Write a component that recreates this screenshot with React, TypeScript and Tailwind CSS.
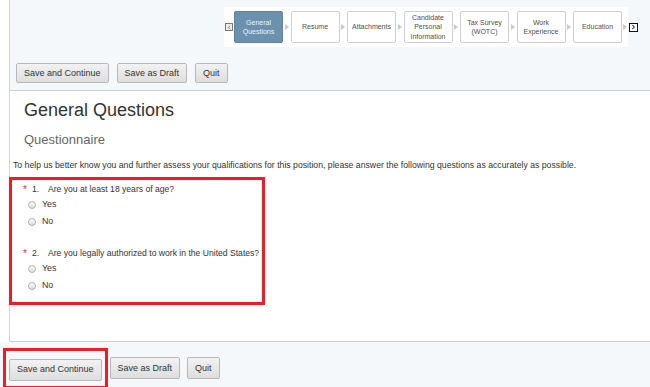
import { ChevronLeft, ChevronRight } from 'lucide-react'

const STEPS = [
  { id: 'general', label: ['General', 'Questions'], active: true },
  { id: 'resume', label: ['Resume'] },
  { id: 'attachments', label: ['Attachments'] },
  { id: 'candidate', label: ['Candidate', 'Personal', 'Information'] },
  { id: 'tax', label: ['Tax Survey', '(WOTC)'] },
  { id: 'work', label: ['Work', 'Experience'] },
  { id: 'education', label: ['Education'] },
]

const QUESTIONS = [
  { n: 1, text: 'Are you at least 18 years of age?' },
  { n: 2, text: 'Are you legally authorized to work in the United States?' },
]

function Arrow({ last }: { last?: boolean }) {
  return (
    <div className={`${last ? 'w-[6px]' : 'w-[7.5px]'} flex items-center justify-center`}>
      <span className="block w-0 h-0 border-y-[3px] border-y-transparent border-l-[4px] border-l-[#c8c8c8]" />
    </div>
  )
}

function Btn({ label, tall }: { label: string; tall?: boolean }) {
  return (
    <button
      className={`px-[7px] ${tall ? 'h-[22px]' : 'h-[20px]'} rounded-[2px] border border-[#b8b8b8] bg-gradient-to-b from-[#f2f2f2] to-[#dedede] text-[9px] text-[#333] leading-none whitespace-nowrap`}
    >
      {label}
    </button>
  )
}

function Radio({ label }: { label: string }) {
  return (
    <div className="flex items-center h-[17px] pl-[16px]">
      <span className="w-[8px] h-[8px] rounded-full border border-[#b0b0b0] bg-gradient-to-b from-white to-[#dcdcdc]" />
      <span className="ml-[6px] text-[8.8px] text-[#333]">{label}</span>
    </div>
  )
}

export default function App() {
  return (
    <div className="w-[650px] h-[387px] overflow-hidden bg-white font-['Liberation_Sans',Arial,sans-serif]">
      <div className="ml-[9px] border-l border-[#d4d4d4] bg-[#f4f8fb]">
        {/* Header */}
        <div className="h-[91px] border-b border-[#cfcfcf]">
          {/* Wizard steps */}
          <div className="flex justify-end items-center pt-[7px] pr-[12px]">
            <div className="h-[40px] bg-white flex items-center pl-[1px]">
              <span className="w-[8px] h-[8px] border border-[#777] bg-[#eee] flex items-center justify-center mr-[1px]">
                <ChevronLeft size={7} strokeWidth={3} className="text-[#555]" />
              </span>
              {STEPS.map((s, i) => (
                <div key={s.id} className="flex items-stretch">
                  {i > 0 && <Arrow />}
                  <div
                    className={`w-[49px] h-[32px] rounded-[2px] border flex flex-col items-center justify-center text-[7px] leading-[9.5px] text-center whitespace-nowrap ${
                      s.active
                        ? 'bg-[#6b91ae] border-[#5d84a2] text-[#eef3f7]'
                        : 'bg-white border-[#cfcfcf] text-[#505050]'
                    }`}
                  >
                    {s.label.map(l => (
                      <span key={l}>{l}</span>
                    ))}
                  </div>
                </div>
              ))}
              <Arrow last />
            </div>
            <span className="w-[9px] h-[9px] border-[1.5px] border-[#111] bg-white flex items-center justify-center ml-[1px]">
              <ChevronRight size={8} strokeWidth={3.5} className="text-[#111]" />
            </span>
          </div>

          {/* Action buttons */}
          <div className="flex gap-[8px] pl-[6px] mt-[16px]">
            <Btn label="Save and Continue" />
            <Btn label="Save as Draft" />
            <Btn label="Quit" />
          </div>
        </div>

        {/* Content */}
        <div className="h-[251px] bg-white border-b border-[#cfcfcf]">
          <h1 className="pl-[14px] pt-[8px] text-[18px] leading-[22px] text-[#333]">General Questions</h1>
          <h2 className="pl-[14px] mt-[11px] text-[13px] leading-[16px] text-[#666]">Questionnaire</h2>
          <p className="pl-[3px] mt-[11px] text-[8.7px] leading-[12px] text-[#333] whitespace-nowrap">
            To help us better know you and further assess your qualifications for this position, please answer the
            following questions as accurately as possible.
          </p>

          <div className="-ml-[1px] mt-[6px] w-[256px] h-[128px] border-[3px] border-[#ee1c25] pt-[2px]">
            {QUESTIONS.map((q, i) => (
              <div key={q.n} className={i > 0 ? 'mt-[16px]' : ''}>
                <div className="flex items-center h-[14px] text-[8.6px] text-[#333] whitespace-nowrap">
                  <span className="pl-[11px] w-[20px] text-[#e03030] text-[10px]">*</span>
                  <span className="w-[16px]">{q.n}.</span>
                  <span>{q.text}</span>
                </div>
                <Radio label="Yes" />
                <Radio label="No" />
              </div>
            ))}
          </div>
        </div>
      </div>

      {/* Footer buttons */}
      <div className="h-[46px] bg-[#f4f8fb] flex items-start pt-[6px] pl-[3px]">
        <div className="border-[3px] border-[#ee1c25] px-[3px] pt-[4px] pb-[5px]">
          <Btn label="Save and Continue" tall />
        </div>
        <div className="flex gap-[7px] ml-[2px] pt-[9px]">
          <Btn label="Save as Draft" tall />
          <Btn label="Quit" tall />
        </div>
      </div>
    </div>
  )
}
